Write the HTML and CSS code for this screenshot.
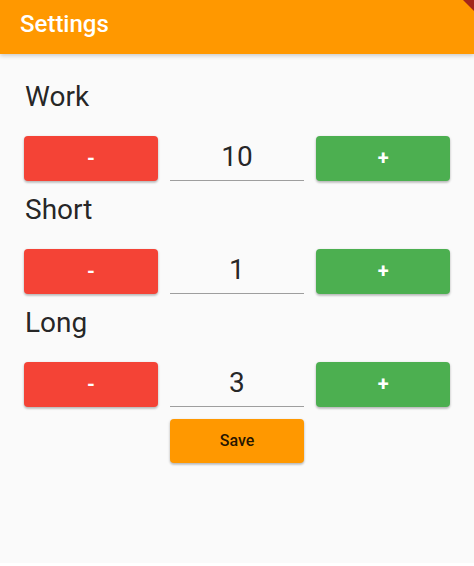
FILE: index.html
```html
<!DOCTYPE html>
<html lang="en">
<head>
<meta charset="utf-8">
<title>Settings</title>
<link rel="stylesheet" href="styles.css">
</head>
<body>
<div class="screen">
  <header class="appbar">
    <h1 class="title">Settings</h1>
    <div class="debug-corner"></div>
  </header>
  <main class="content">
    <div class="grid">
      <div class="label">Work</div>
      <div class="empty"></div>
      <div class="empty"></div>
      <button class="btn btn-minus">-</button>
      <div class="field"><span class="value">10</span></div>
      <button class="btn btn-plus">+</button>

      <div class="label">Short</div>
      <div class="empty"></div>
      <div class="empty"></div>
      <button class="btn btn-minus">-</button>
      <div class="field"><span class="value">1</span></div>
      <button class="btn btn-plus">+</button>

      <div class="label">Long</div>
      <div class="empty"></div>
      <div class="empty"></div>
      <button class="btn btn-minus">-</button>
      <div class="field"><span class="value">3</span></div>
      <button class="btn btn-plus">+</button>

      <div class="empty"></div>
      <button class="btn btn-save">Save</button>
      <div class="empty"></div>
    </div>
  </main>
</div>
</body>
</html>
```

FILE: styles.css
```css
* {
  box-sizing: border-box;
}

html, body {
  margin: 0;
  padding: 0;
  background: #ffffff;
}

body {
  font-family: Roboto, "Noto Sans", "Liberation Sans", sans-serif;
  width: 474px;
  height: 566px;
  overflow: hidden;
}

.screen {
  width: 474px;
  height: 563px;
  display: flex;
  flex-direction: column;
  background: #fafafa;
}

.appbar {
  position: relative;
  height: 54px;
  flex: none;
  background: #ff9800;
  padding: 10px 20px 0;
  box-shadow: 0 2px 4px rgba(0, 0, 0, 0.18);
  z-index: 1;
  overflow: hidden;
}

.title {
  margin: 0;
  font-size: 24px;
  font-weight: 500;
  line-height: normal;
  color: #ffffff;
}

.debug-corner {
  position: absolute;
  top: 0;
  right: 0;
  width: 11px;
  height: 11px;
  background: #a3261b;
  clip-path: polygon(0 0, 100% 0, 100% 100%);
}

.content {
  flex: 1;
  padding: 25.5px 24px 0;
}

.grid {
  display: grid;
  grid-template-columns: repeat(3, 1fr);
  grid-auto-rows: 44.5px;
  column-gap: 12.5px;
  row-gap: 12px;
}

.label {
  font-size: 28px;
  line-height: normal;
  color: rgba(0, 0, 0, 0.87);
  padding-left: 1px;
  white-space: nowrap;
}

.btn {
  border: none;
  border-radius: 4px;
  font-family: Roboto, "Noto Sans", "Liberation Sans", sans-serif;
  cursor: pointer;
  padding: 0;
  display: flex;
  align-items: center;
  justify-content: center;
  box-shadow: 0 1px 3px rgba(0, 0, 0, 0.2), 0 2px 2px rgba(0, 0, 0, 0.12);
}

.btn-minus {
  background: #f44336;
  color: #ffffff;
  font-size: 20px;
  font-weight: 700;
}

.btn-plus {
  background: #4caf50;
  color: #ffffff;
  font-size: 20px;
  font-weight: 700;
}

.btn-save {
  background: #ff9800;
  color: rgba(0, 0, 0, 0.87);
  font-size: 16px;
  font-weight: 500;
}

.field {
  display: flex;
  align-items: center;
  justify-content: center;
  padding-bottom: 2px;
  border-bottom: 1px solid #9e9e9e;
}

.value {
  font-size: 28px;
  line-height: normal;
  color: rgba(0, 0, 0, 0.87);
}
```
